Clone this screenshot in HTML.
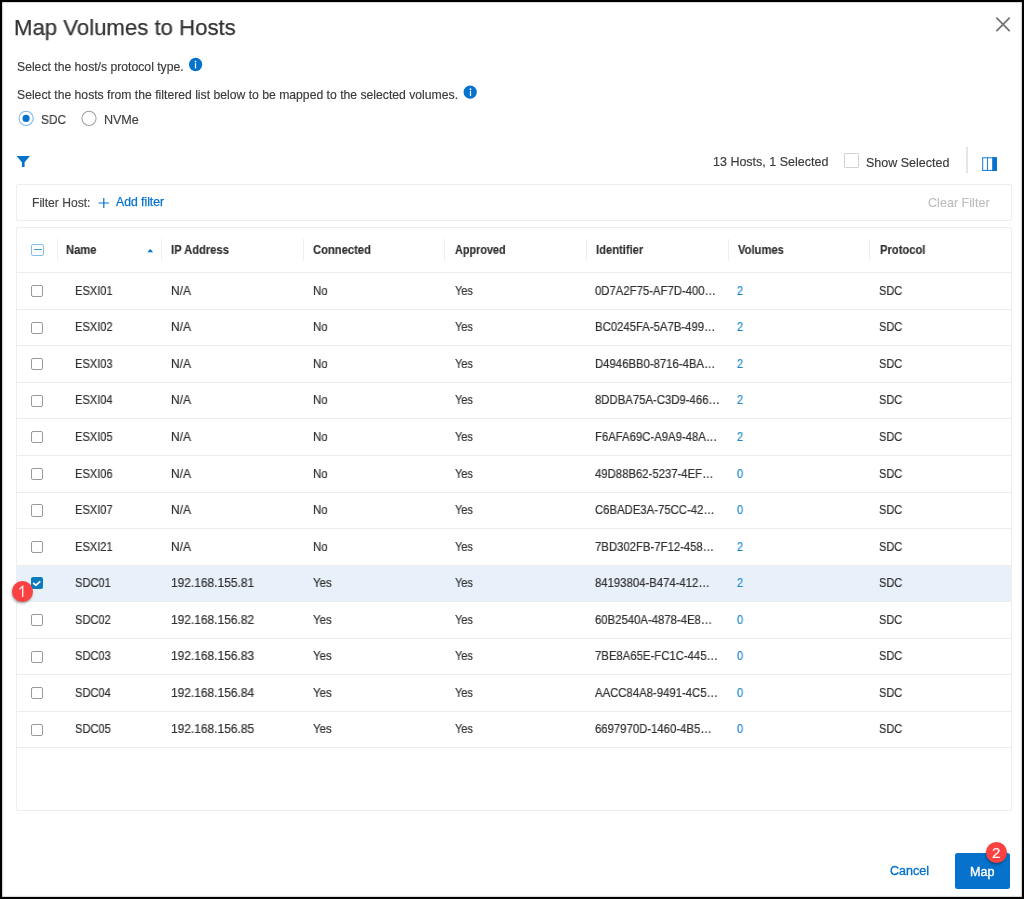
<!DOCTYPE html>
<html><head><meta charset="utf-8"><style>
html,body{margin:0;padding:0;background:#000;}
body{width:1024px;height:899px;overflow:hidden;position:relative;font-family:"Liberation Sans",sans-serif;color:#303030;}
#m{position:absolute;left:2px;top:2px;width:1020px;height:895px;background:#fff;box-shadow:inset 0 0 1.2px 0.3px rgba(0,0,0,0.45);}
.t{position:absolute;white-space:nowrap;will-change:transform;-webkit-text-stroke:0.15px currentColor;}
.a{position:absolute;}
.b{font-weight:bold;color:#303030;}
.blue{color:#0672cb;}
.vb{color:#1f87cd;}
</style></head><body>
<div id="m"></div>
<div class="t " style="left:14.40px;top:14.90px;font-size:22.4px;line-height:26.88px;transform:scaleX(0.99);transform-origin:0 0;color:#333;-webkit-text-stroke:0.25px #333">Map Volumes to Hosts</div>
<svg class="a" style="left:990px;top:10px" width="26" height="28" viewBox="0 0 26 28"><path d="M6.4 7.6 L19.7 21.1 M19.7 7.6 L6.4 21.1" stroke="#737373" stroke-width="1.75" fill="none"/></svg>
<div class="t " style="left:17.20px;top:59.65px;font-size:12.2px;line-height:14.64px;color:#3a3a3a">Select the host/s protocol type.</div>
<svg class="a" style="left:187px;top:56px" width="16" height="16" viewBox="0 0 16 16"><circle cx="8.60" cy="8.50" r="6.65" fill="#0672cb"/><rect x="7.90" y="7.20" width="1.2" height="5.2" fill="#fff"/><circle cx="8.50" cy="5.60" r="0.85" fill="#fff"/></svg>
<div class="t " style="left:17.20px;top:87.65px;font-size:12.2px;line-height:14.64px;color:#3a3a3a">Select the hosts from the filtered list below to be mapped to the selected volumes.</div>
<svg class="a" style="left:462px;top:84px" width="16" height="16" viewBox="0 0 16 16"><circle cx="8.20" cy="8.10" r="6.65" fill="#0672cb"/><rect x="7.90" y="6.80" width="1.2" height="5.2" fill="#fff"/><circle cx="8.50" cy="5.20" r="0.85" fill="#fff"/></svg>
<svg class="a" style="left:16px;top:108px" width="20" height="20" viewBox="0 0 20 20"><circle cx="10.1" cy="10.35" r="7.1" fill="#fff" stroke="#7db6ea" stroke-width="1.1"/><circle cx="10.05" cy="10.4" r="3.55" fill="#0672cb"/></svg>
<div class="t " style="left:41.00px;top:112.87px;font-size:12.6px;line-height:15.12px;transform:scaleX(0.94);transform-origin:0 0;color:#353535">SDC</div>
<svg class="a" style="left:78.5px;top:108px" width="20" height="20" viewBox="0 0 20 20"><circle cx="10" cy="10.35" r="7.1" fill="#fff" stroke="#a0a0a0" stroke-width="1.1"/></svg>
<div class="t " style="left:104.00px;top:112.87px;font-size:12.6px;line-height:15.12px;color:#404040;letter-spacing:-0.1px">NVMe</div>
<svg class="a" style="left:0;top:0" width="40" height="180"><path d="M16.6 155.9 L29.9 155.9 L24.6 162.2 L24.6 166.9 L21.9 166.9 L21.9 162.2 Z" fill="#0672cb"/></svg>
<div class="t " style="left:712.80px;top:154.77px;font-size:12.5px;line-height:15.0px;color:#3a3a3a">13 Hosts, 1 Selected</div>
<div class="a" style="left:844px;top:153px;width:13px;height:13px;border:1px solid #d2d2d2;border-radius:1px;background:#fff"></div>
<div class="t " style="left:866.00px;top:155.57px;font-size:12.5px;line-height:15.0px;color:#3a3a3a">Show Selected</div>
<div class="a" style="left:966px;top:147px;width:1.6px;height:26px;background:#e3e6ea"></div>
<svg class="a" style="left:981px;top:156px" width="18" height="17" viewBox="0 0 18 17"><rect x="1.65" y="1.75" width="13.7" height="12.7" fill="#fff" stroke="#0672cb" stroke-width="1.1" stroke-opacity="0.85"/><rect x="11.2" y="1.2" width="4.7" height="13.8" fill="#0672cb"/><line x1="6.5" y1="1.5" x2="6.5" y2="14.6" stroke="#0672cb" stroke-width="1.1" stroke-opacity="0.85"/></svg>
<div class="a" style="left:16.2px;top:183.6px;width:994.1px;height:35.6px;border:1px solid #eeeeee;border-radius:2px;"></div>
<div class="t " style="left:32.40px;top:195.55px;font-size:12.1px;line-height:14.52px;color:#444">Filter Host:</div>
<svg class="a" style="left:97px;top:197px" width="13" height="12" viewBox="0 0 13 12"><path d="M6.8 1 V11 M1.5 6 H12" stroke="#0672cb" stroke-width="1.2"/></svg>
<div class="t blue" style="left:115.70px;top:195.45px;font-size:12.2px;line-height:14.64px;-webkit-text-stroke:0.25px #0672cb">Add filter</div>
<div class="t " style="left:928.00px;top:196.07px;font-size:12.6px;line-height:15.12px;color:#bebebe">Clear Filter</div>
<div class="a" style="left:16.2px;top:227px;width:994.1px;height:582px;border:1px solid #eeeeee;border-radius:2px;"></div>
<div class="a" style="left:56.9px;top:239.3px;width:1px;height:21.5px;background:#eeeeee"></div>
<div class="a" style="left:161.4px;top:239.3px;width:1px;height:21.5px;background:#eeeeee"></div>
<div class="a" style="left:302.8px;top:239.3px;width:1px;height:21.5px;background:#eeeeee"></div>
<div class="a" style="left:444.4px;top:239.3px;width:1px;height:21.5px;background:#eeeeee"></div>
<div class="a" style="left:586.1px;top:239.3px;width:1px;height:21.5px;background:#eeeeee"></div>
<div class="a" style="left:727.7px;top:239.3px;width:1px;height:21.5px;background:#eeeeee"></div>
<div class="a" style="left:869.0px;top:239.3px;width:1px;height:21.5px;background:#eeeeee"></div>
<div class="a" style="left:31.3px;top:244px;width:10.6px;height:10px;border:1px solid #86bde9;border-radius:2px;background:#fff"></div>
<div class="a" style="left:34px;top:248.9px;width:8px;height:1.2px;background:#3a9ad0;border-radius:0.6px"></div>
<div class="t b" style="left:66.00px;top:242.86px;font-size:12.4px;line-height:14.88px;transform:scaleX(0.904);transform-origin:0 0;">Name</div>
<div class="t b" style="left:171.10px;top:242.86px;font-size:12.4px;line-height:14.88px;transform:scaleX(0.904);transform-origin:0 0;">IP Address</div>
<div class="t b" style="left:313.00px;top:242.86px;font-size:12.4px;line-height:14.88px;transform:scaleX(0.904);transform-origin:0 0;">Connected</div>
<div class="t b" style="left:454.60px;top:242.86px;font-size:12.4px;line-height:14.88px;transform:scaleX(0.875);transform-origin:0 0;">Approved</div>
<div class="t b" style="left:596.00px;top:242.86px;font-size:12.4px;line-height:14.88px;transform:scaleX(0.904);transform-origin:0 0;">Identifier</div>
<div class="t b" style="left:737.60px;top:242.86px;font-size:12.4px;line-height:14.88px;transform:scaleX(0.904);transform-origin:0 0;">Volumes</div>
<div class="t b" style="left:879.70px;top:242.86px;font-size:12.4px;line-height:14.88px;transform:scaleX(0.904);transform-origin:0 0;">Protocol</div>
<svg class="a" style="left:146px;top:248px" width="8" height="6" viewBox="0 0 8 6"><path d="M1.3 4.25 L4.35 1.1 L7.1 4.25 Z" fill="#0672cb"/></svg>
<div class="a" style="left:17.2px;top:272.20px;width:994.1px;height:1px;background:#ededed"></div>
<div class="a" style="left:17.2px;top:308.76px;width:994.1px;height:1px;background:#ededed"></div>
<div class="a" style="left:17.2px;top:345.32px;width:994.1px;height:1px;background:#ededed"></div>
<div class="a" style="left:17.2px;top:381.88px;width:994.1px;height:1px;background:#ededed"></div>
<div class="a" style="left:17.2px;top:418.44px;width:994.1px;height:1px;background:#ededed"></div>
<div class="a" style="left:17.2px;top:455.00px;width:994.1px;height:1px;background:#ededed"></div>
<div class="a" style="left:17.2px;top:491.56px;width:994.1px;height:1px;background:#ededed"></div>
<div class="a" style="left:17.2px;top:528.12px;width:994.1px;height:1px;background:#ededed"></div>
<div class="a" style="left:17.2px;top:565.68px;width:994.1px;height:35.56px;background:#e8f1fa"></div>
<div class="a" style="left:17.2px;top:564.68px;width:994.1px;height:1px;background:#ededed"></div>
<div class="a" style="left:17.2px;top:601.24px;width:994.1px;height:1px;background:#ededed"></div>
<div class="a" style="left:17.2px;top:637.80px;width:994.1px;height:1px;background:#ededed"></div>
<div class="a" style="left:17.2px;top:674.36px;width:994.1px;height:1px;background:#ededed"></div>
<div class="a" style="left:17.2px;top:710.92px;width:994.1px;height:1px;background:#ededed"></div>
<div class="a" style="left:17.2px;top:747.48px;width:994.1px;height:1px;background:#ededed"></div>
<div class="a" style="left:31.2px;top:285.08px;width:9.6px;height:10.1px;border:1px solid #9a9a9a;border-radius:2px;background:#fff"></div>
<div class="t " style="left:74.70px;top:283.75px;font-size:12.2px;line-height:14.64px;transform:scaleX(0.91);transform-origin:0 0;-webkit-text-stroke:0.2px currentColor;">ESXI01</div>
<div class="t " style="left:170.90px;top:283.75px;font-size:12.2px;line-height:14.64px;transform:scaleX(0.98);transform-origin:0 0;-webkit-text-stroke:0.2px currentColor;">N/A</div>
<div class="t " style="left:312.70px;top:283.75px;font-size:12.2px;line-height:14.64px;transform:scaleX(0.94);transform-origin:0 0;-webkit-text-stroke:0.2px currentColor;">No</div>
<div class="t " style="left:454.60px;top:283.75px;font-size:12.2px;line-height:14.64px;transform:scaleX(0.9);transform-origin:0 0;-webkit-text-stroke:0.2px currentColor;">Yes</div>
<div class="t " style="left:595.30px;top:283.75px;font-size:12.2px;line-height:14.64px;transform:scaleX(0.93);transform-origin:0 0;-webkit-text-stroke:0.2px currentColor;">0D7A2F75-AF7D-400…</div>
<div class="t vb" style="left:737.20px;top:283.75px;font-size:12.2px;line-height:14.64px;transform:scaleX(0.9);transform-origin:0 0;-webkit-text-stroke:0.2px currentColor;">2</div>
<div class="t " style="left:879.20px;top:283.75px;font-size:12.2px;line-height:14.64px;transform:scaleX(0.9);transform-origin:0 0;-webkit-text-stroke:0.2px currentColor;">SDC</div>
<div class="a" style="left:31.2px;top:321.64px;width:9.6px;height:10.1px;border:1px solid #9a9a9a;border-radius:2px;background:#fff"></div>
<div class="t " style="left:74.70px;top:320.31px;font-size:12.2px;line-height:14.64px;transform:scaleX(0.91);transform-origin:0 0;-webkit-text-stroke:0.2px currentColor;">ESXI02</div>
<div class="t " style="left:170.90px;top:320.31px;font-size:12.2px;line-height:14.64px;transform:scaleX(0.98);transform-origin:0 0;-webkit-text-stroke:0.2px currentColor;">N/A</div>
<div class="t " style="left:312.70px;top:320.31px;font-size:12.2px;line-height:14.64px;transform:scaleX(0.94);transform-origin:0 0;-webkit-text-stroke:0.2px currentColor;">No</div>
<div class="t " style="left:454.60px;top:320.31px;font-size:12.2px;line-height:14.64px;transform:scaleX(0.9);transform-origin:0 0;-webkit-text-stroke:0.2px currentColor;">Yes</div>
<div class="t " style="left:595.30px;top:320.31px;font-size:12.2px;line-height:14.64px;transform:scaleX(0.93);transform-origin:0 0;-webkit-text-stroke:0.2px currentColor;">BC0245FA-5A7B-499…</div>
<div class="t vb" style="left:737.20px;top:320.31px;font-size:12.2px;line-height:14.64px;transform:scaleX(0.9);transform-origin:0 0;-webkit-text-stroke:0.2px currentColor;">2</div>
<div class="t " style="left:879.20px;top:320.31px;font-size:12.2px;line-height:14.64px;transform:scaleX(0.9);transform-origin:0 0;-webkit-text-stroke:0.2px currentColor;">SDC</div>
<div class="a" style="left:31.2px;top:358.20px;width:9.6px;height:10.1px;border:1px solid #9a9a9a;border-radius:2px;background:#fff"></div>
<div class="t " style="left:74.70px;top:356.87px;font-size:12.2px;line-height:14.64px;transform:scaleX(0.91);transform-origin:0 0;-webkit-text-stroke:0.2px currentColor;">ESXI03</div>
<div class="t " style="left:170.90px;top:356.87px;font-size:12.2px;line-height:14.64px;transform:scaleX(0.98);transform-origin:0 0;-webkit-text-stroke:0.2px currentColor;">N/A</div>
<div class="t " style="left:312.70px;top:356.87px;font-size:12.2px;line-height:14.64px;transform:scaleX(0.94);transform-origin:0 0;-webkit-text-stroke:0.2px currentColor;">No</div>
<div class="t " style="left:454.60px;top:356.87px;font-size:12.2px;line-height:14.64px;transform:scaleX(0.9);transform-origin:0 0;-webkit-text-stroke:0.2px currentColor;">Yes</div>
<div class="t " style="left:595.30px;top:356.87px;font-size:12.2px;line-height:14.64px;transform:scaleX(0.93);transform-origin:0 0;-webkit-text-stroke:0.2px currentColor;">D4946BB0-8716-4BA…</div>
<div class="t vb" style="left:737.20px;top:356.87px;font-size:12.2px;line-height:14.64px;transform:scaleX(0.9);transform-origin:0 0;-webkit-text-stroke:0.2px currentColor;">2</div>
<div class="t " style="left:879.20px;top:356.87px;font-size:12.2px;line-height:14.64px;transform:scaleX(0.9);transform-origin:0 0;-webkit-text-stroke:0.2px currentColor;">SDC</div>
<div class="a" style="left:31.2px;top:394.76px;width:9.6px;height:10.1px;border:1px solid #9a9a9a;border-radius:2px;background:#fff"></div>
<div class="t " style="left:74.70px;top:393.43px;font-size:12.2px;line-height:14.64px;transform:scaleX(0.91);transform-origin:0 0;-webkit-text-stroke:0.2px currentColor;">ESXI04</div>
<div class="t " style="left:170.90px;top:393.43px;font-size:12.2px;line-height:14.64px;transform:scaleX(0.98);transform-origin:0 0;-webkit-text-stroke:0.2px currentColor;">N/A</div>
<div class="t " style="left:312.70px;top:393.43px;font-size:12.2px;line-height:14.64px;transform:scaleX(0.94);transform-origin:0 0;-webkit-text-stroke:0.2px currentColor;">No</div>
<div class="t " style="left:454.60px;top:393.43px;font-size:12.2px;line-height:14.64px;transform:scaleX(0.9);transform-origin:0 0;-webkit-text-stroke:0.2px currentColor;">Yes</div>
<div class="t " style="left:595.30px;top:393.43px;font-size:12.2px;line-height:14.64px;transform:scaleX(0.93);transform-origin:0 0;-webkit-text-stroke:0.2px currentColor;">8DDBA75A-C3D9-466…</div>
<div class="t vb" style="left:737.20px;top:393.43px;font-size:12.2px;line-height:14.64px;transform:scaleX(0.9);transform-origin:0 0;-webkit-text-stroke:0.2px currentColor;">2</div>
<div class="t " style="left:879.20px;top:393.43px;font-size:12.2px;line-height:14.64px;transform:scaleX(0.9);transform-origin:0 0;-webkit-text-stroke:0.2px currentColor;">SDC</div>
<div class="a" style="left:31.2px;top:431.32px;width:9.6px;height:10.1px;border:1px solid #9a9a9a;border-radius:2px;background:#fff"></div>
<div class="t " style="left:74.70px;top:429.99px;font-size:12.2px;line-height:14.64px;transform:scaleX(0.91);transform-origin:0 0;-webkit-text-stroke:0.2px currentColor;">ESXI05</div>
<div class="t " style="left:170.90px;top:429.99px;font-size:12.2px;line-height:14.64px;transform:scaleX(0.98);transform-origin:0 0;-webkit-text-stroke:0.2px currentColor;">N/A</div>
<div class="t " style="left:312.70px;top:429.99px;font-size:12.2px;line-height:14.64px;transform:scaleX(0.94);transform-origin:0 0;-webkit-text-stroke:0.2px currentColor;">No</div>
<div class="t " style="left:454.60px;top:429.99px;font-size:12.2px;line-height:14.64px;transform:scaleX(0.9);transform-origin:0 0;-webkit-text-stroke:0.2px currentColor;">Yes</div>
<div class="t " style="left:595.30px;top:429.99px;font-size:12.2px;line-height:14.64px;transform:scaleX(0.93);transform-origin:0 0;-webkit-text-stroke:0.2px currentColor;">F6AFA69C-A9A9-48A…</div>
<div class="t vb" style="left:737.20px;top:429.99px;font-size:12.2px;line-height:14.64px;transform:scaleX(0.9);transform-origin:0 0;-webkit-text-stroke:0.2px currentColor;">2</div>
<div class="t " style="left:879.20px;top:429.99px;font-size:12.2px;line-height:14.64px;transform:scaleX(0.9);transform-origin:0 0;-webkit-text-stroke:0.2px currentColor;">SDC</div>
<div class="a" style="left:31.2px;top:467.88px;width:9.6px;height:10.1px;border:1px solid #9a9a9a;border-radius:2px;background:#fff"></div>
<div class="t " style="left:74.70px;top:466.55px;font-size:12.2px;line-height:14.64px;transform:scaleX(0.91);transform-origin:0 0;-webkit-text-stroke:0.2px currentColor;">ESXI06</div>
<div class="t " style="left:170.90px;top:466.55px;font-size:12.2px;line-height:14.64px;transform:scaleX(0.98);transform-origin:0 0;-webkit-text-stroke:0.2px currentColor;">N/A</div>
<div class="t " style="left:312.70px;top:466.55px;font-size:12.2px;line-height:14.64px;transform:scaleX(0.94);transform-origin:0 0;-webkit-text-stroke:0.2px currentColor;">No</div>
<div class="t " style="left:454.60px;top:466.55px;font-size:12.2px;line-height:14.64px;transform:scaleX(0.9);transform-origin:0 0;-webkit-text-stroke:0.2px currentColor;">Yes</div>
<div class="t " style="left:595.30px;top:466.55px;font-size:12.2px;line-height:14.64px;transform:scaleX(0.93);transform-origin:0 0;-webkit-text-stroke:0.2px currentColor;">49D88B62-5237-4EF…</div>
<div class="t vb" style="left:737.20px;top:466.55px;font-size:12.2px;line-height:14.64px;transform:scaleX(0.9);transform-origin:0 0;-webkit-text-stroke:0.2px currentColor;">0</div>
<div class="t " style="left:879.20px;top:466.55px;font-size:12.2px;line-height:14.64px;transform:scaleX(0.9);transform-origin:0 0;-webkit-text-stroke:0.2px currentColor;">SDC</div>
<div class="a" style="left:31.2px;top:504.44px;width:9.6px;height:10.1px;border:1px solid #9a9a9a;border-radius:2px;background:#fff"></div>
<div class="t " style="left:74.70px;top:503.11px;font-size:12.2px;line-height:14.64px;transform:scaleX(0.91);transform-origin:0 0;-webkit-text-stroke:0.2px currentColor;">ESXI07</div>
<div class="t " style="left:170.90px;top:503.11px;font-size:12.2px;line-height:14.64px;transform:scaleX(0.98);transform-origin:0 0;-webkit-text-stroke:0.2px currentColor;">N/A</div>
<div class="t " style="left:312.70px;top:503.11px;font-size:12.2px;line-height:14.64px;transform:scaleX(0.94);transform-origin:0 0;-webkit-text-stroke:0.2px currentColor;">No</div>
<div class="t " style="left:454.60px;top:503.11px;font-size:12.2px;line-height:14.64px;transform:scaleX(0.9);transform-origin:0 0;-webkit-text-stroke:0.2px currentColor;">Yes</div>
<div class="t " style="left:595.30px;top:503.11px;font-size:12.2px;line-height:14.64px;transform:scaleX(0.93);transform-origin:0 0;-webkit-text-stroke:0.2px currentColor;">C6BADE3A-75CC-42…</div>
<div class="t vb" style="left:737.20px;top:503.11px;font-size:12.2px;line-height:14.64px;transform:scaleX(0.9);transform-origin:0 0;-webkit-text-stroke:0.2px currentColor;">0</div>
<div class="t " style="left:879.20px;top:503.11px;font-size:12.2px;line-height:14.64px;transform:scaleX(0.9);transform-origin:0 0;-webkit-text-stroke:0.2px currentColor;">SDC</div>
<div class="a" style="left:31.2px;top:541.00px;width:9.6px;height:10.1px;border:1px solid #9a9a9a;border-radius:2px;background:#fff"></div>
<div class="t " style="left:74.70px;top:539.67px;font-size:12.2px;line-height:14.64px;transform:scaleX(0.91);transform-origin:0 0;-webkit-text-stroke:0.2px currentColor;">ESXI21</div>
<div class="t " style="left:170.90px;top:539.67px;font-size:12.2px;line-height:14.64px;transform:scaleX(0.98);transform-origin:0 0;-webkit-text-stroke:0.2px currentColor;">N/A</div>
<div class="t " style="left:312.70px;top:539.67px;font-size:12.2px;line-height:14.64px;transform:scaleX(0.94);transform-origin:0 0;-webkit-text-stroke:0.2px currentColor;">No</div>
<div class="t " style="left:454.60px;top:539.67px;font-size:12.2px;line-height:14.64px;transform:scaleX(0.9);transform-origin:0 0;-webkit-text-stroke:0.2px currentColor;">Yes</div>
<div class="t " style="left:595.30px;top:539.67px;font-size:12.2px;line-height:14.64px;transform:scaleX(0.93);transform-origin:0 0;-webkit-text-stroke:0.2px currentColor;">7BD302FB-7F12-458…</div>
<div class="t vb" style="left:737.20px;top:539.67px;font-size:12.2px;line-height:14.64px;transform:scaleX(0.9);transform-origin:0 0;-webkit-text-stroke:0.2px currentColor;">2</div>
<div class="t " style="left:879.20px;top:539.67px;font-size:12.2px;line-height:14.64px;transform:scaleX(0.9);transform-origin:0 0;-webkit-text-stroke:0.2px currentColor;">SDC</div>
<div class="a" style="left:31.2px;top:577.26px;width:11.8px;height:11.9px;border-radius:2px;background:#0b7bbd"></div>
<svg class="a" style="left:31.2px;top:577.26px" width="12" height="12" viewBox="0 0 12 12"><path d="M2.1 6 L4.9 8.1 L9.3 4.3" stroke="#fff" stroke-width="1.6" fill="none"/></svg>
<div class="t " style="left:74.70px;top:576.23px;font-size:12.2px;line-height:14.64px;transform:scaleX(0.91);transform-origin:0 0;-webkit-text-stroke:0.2px currentColor;">SDC01</div>
<div class="t " style="left:170.90px;top:576.23px;font-size:12.2px;line-height:14.64px;transform:scaleX(0.98);transform-origin:0 0;-webkit-text-stroke:0.2px currentColor;">192.168.155.81</div>
<div class="t " style="left:312.70px;top:576.23px;font-size:12.2px;line-height:14.64px;transform:scaleX(0.94);transform-origin:0 0;-webkit-text-stroke:0.2px currentColor;">Yes</div>
<div class="t " style="left:454.60px;top:576.23px;font-size:12.2px;line-height:14.64px;transform:scaleX(0.9);transform-origin:0 0;-webkit-text-stroke:0.2px currentColor;">Yes</div>
<div class="t " style="left:595.30px;top:576.23px;font-size:12.2px;line-height:14.64px;transform:scaleX(0.93);transform-origin:0 0;-webkit-text-stroke:0.2px currentColor;">84193804-B474-412…</div>
<div class="t vb" style="left:737.20px;top:576.23px;font-size:12.2px;line-height:14.64px;transform:scaleX(0.9);transform-origin:0 0;-webkit-text-stroke:0.2px currentColor;">2</div>
<div class="t " style="left:879.20px;top:576.23px;font-size:12.2px;line-height:14.64px;transform:scaleX(0.9);transform-origin:0 0;-webkit-text-stroke:0.2px currentColor;">SDC</div>
<div class="a" style="left:31.2px;top:614.12px;width:9.6px;height:10.1px;border:1px solid #9a9a9a;border-radius:2px;background:#fff"></div>
<div class="t " style="left:74.70px;top:612.79px;font-size:12.2px;line-height:14.64px;transform:scaleX(0.91);transform-origin:0 0;-webkit-text-stroke:0.2px currentColor;">SDC02</div>
<div class="t " style="left:170.90px;top:612.79px;font-size:12.2px;line-height:14.64px;transform:scaleX(0.98);transform-origin:0 0;-webkit-text-stroke:0.2px currentColor;">192.168.156.82</div>
<div class="t " style="left:312.70px;top:612.79px;font-size:12.2px;line-height:14.64px;transform:scaleX(0.94);transform-origin:0 0;-webkit-text-stroke:0.2px currentColor;">Yes</div>
<div class="t " style="left:454.60px;top:612.79px;font-size:12.2px;line-height:14.64px;transform:scaleX(0.9);transform-origin:0 0;-webkit-text-stroke:0.2px currentColor;">Yes</div>
<div class="t " style="left:595.30px;top:612.79px;font-size:12.2px;line-height:14.64px;transform:scaleX(0.93);transform-origin:0 0;-webkit-text-stroke:0.2px currentColor;">60B2540A-4878-4E8…</div>
<div class="t vb" style="left:737.20px;top:612.79px;font-size:12.2px;line-height:14.64px;transform:scaleX(0.9);transform-origin:0 0;-webkit-text-stroke:0.2px currentColor;">0</div>
<div class="t " style="left:879.20px;top:612.79px;font-size:12.2px;line-height:14.64px;transform:scaleX(0.9);transform-origin:0 0;-webkit-text-stroke:0.2px currentColor;">SDC</div>
<div class="a" style="left:31.2px;top:650.68px;width:9.6px;height:10.1px;border:1px solid #9a9a9a;border-radius:2px;background:#fff"></div>
<div class="t " style="left:74.70px;top:649.35px;font-size:12.2px;line-height:14.64px;transform:scaleX(0.91);transform-origin:0 0;-webkit-text-stroke:0.2px currentColor;">SDC03</div>
<div class="t " style="left:170.90px;top:649.35px;font-size:12.2px;line-height:14.64px;transform:scaleX(0.98);transform-origin:0 0;-webkit-text-stroke:0.2px currentColor;">192.168.156.83</div>
<div class="t " style="left:312.70px;top:649.35px;font-size:12.2px;line-height:14.64px;transform:scaleX(0.94);transform-origin:0 0;-webkit-text-stroke:0.2px currentColor;">Yes</div>
<div class="t " style="left:454.60px;top:649.35px;font-size:12.2px;line-height:14.64px;transform:scaleX(0.9);transform-origin:0 0;-webkit-text-stroke:0.2px currentColor;">Yes</div>
<div class="t " style="left:595.30px;top:649.35px;font-size:12.2px;line-height:14.64px;transform:scaleX(0.93);transform-origin:0 0;-webkit-text-stroke:0.2px currentColor;">7BE8A65E-FC1C-445…</div>
<div class="t vb" style="left:737.20px;top:649.35px;font-size:12.2px;line-height:14.64px;transform:scaleX(0.9);transform-origin:0 0;-webkit-text-stroke:0.2px currentColor;">0</div>
<div class="t " style="left:879.20px;top:649.35px;font-size:12.2px;line-height:14.64px;transform:scaleX(0.9);transform-origin:0 0;-webkit-text-stroke:0.2px currentColor;">SDC</div>
<div class="a" style="left:31.2px;top:687.24px;width:9.6px;height:10.1px;border:1px solid #9a9a9a;border-radius:2px;background:#fff"></div>
<div class="t " style="left:74.70px;top:685.91px;font-size:12.2px;line-height:14.64px;transform:scaleX(0.91);transform-origin:0 0;-webkit-text-stroke:0.2px currentColor;">SDC04</div>
<div class="t " style="left:170.90px;top:685.91px;font-size:12.2px;line-height:14.64px;transform:scaleX(0.98);transform-origin:0 0;-webkit-text-stroke:0.2px currentColor;">192.168.156.84</div>
<div class="t " style="left:312.70px;top:685.91px;font-size:12.2px;line-height:14.64px;transform:scaleX(0.94);transform-origin:0 0;-webkit-text-stroke:0.2px currentColor;">Yes</div>
<div class="t " style="left:454.60px;top:685.91px;font-size:12.2px;line-height:14.64px;transform:scaleX(0.9);transform-origin:0 0;-webkit-text-stroke:0.2px currentColor;">Yes</div>
<div class="t " style="left:595.30px;top:685.91px;font-size:12.2px;line-height:14.64px;transform:scaleX(0.93);transform-origin:0 0;-webkit-text-stroke:0.2px currentColor;">AACC84A8-9491-4C5…</div>
<div class="t vb" style="left:737.20px;top:685.91px;font-size:12.2px;line-height:14.64px;transform:scaleX(0.9);transform-origin:0 0;-webkit-text-stroke:0.2px currentColor;">0</div>
<div class="t " style="left:879.20px;top:685.91px;font-size:12.2px;line-height:14.64px;transform:scaleX(0.9);transform-origin:0 0;-webkit-text-stroke:0.2px currentColor;">SDC</div>
<div class="a" style="left:31.2px;top:723.80px;width:9.6px;height:10.1px;border:1px solid #9a9a9a;border-radius:2px;background:#fff"></div>
<div class="t " style="left:74.70px;top:722.47px;font-size:12.2px;line-height:14.64px;transform:scaleX(0.91);transform-origin:0 0;-webkit-text-stroke:0.2px currentColor;">SDC05</div>
<div class="t " style="left:170.90px;top:722.47px;font-size:12.2px;line-height:14.64px;transform:scaleX(0.98);transform-origin:0 0;-webkit-text-stroke:0.2px currentColor;">192.168.156.85</div>
<div class="t " style="left:312.70px;top:722.47px;font-size:12.2px;line-height:14.64px;transform:scaleX(0.94);transform-origin:0 0;-webkit-text-stroke:0.2px currentColor;">Yes</div>
<div class="t " style="left:454.60px;top:722.47px;font-size:12.2px;line-height:14.64px;transform:scaleX(0.9);transform-origin:0 0;-webkit-text-stroke:0.2px currentColor;">Yes</div>
<div class="t " style="left:595.30px;top:722.47px;font-size:12.2px;line-height:14.64px;transform:scaleX(0.93);transform-origin:0 0;-webkit-text-stroke:0.2px currentColor;">6697970D-1460-4B5…</div>
<div class="t vb" style="left:737.20px;top:722.47px;font-size:12.2px;line-height:14.64px;transform:scaleX(0.9);transform-origin:0 0;-webkit-text-stroke:0.2px currentColor;">0</div>
<div class="t " style="left:879.20px;top:722.47px;font-size:12.2px;line-height:14.64px;transform:scaleX(0.9);transform-origin:0 0;-webkit-text-stroke:0.2px currentColor;">SDC</div>
<div class="a" style="left:11.50px;top:581.00px;width:21.0px;height:21.0px;border-radius:50%;background:#fb4242;box-shadow:-0.5px 1.5px 2.5px rgba(0,0,0,0.35);"></div>
<div class="t " style="left:0.00px;top:-14.20px;font-size:15px;line-height:18.0px;color:#fff"></div>
<svg class="a" style="left:0;top:570px" width="40" height="40"><path d="M19.3 19.4 L22.7 16.3 L22.7 27" stroke="#fff" stroke-width="1.25" fill="none" stroke-linejoin="miter"/></svg>
<div class="t " style="left:890.00px;top:864.37px;font-size:12.5px;line-height:15.0px;color:#0672cb;-webkit-text-stroke:0.35px #0672cb">Cancel</div>
<div class="a" style="left:955.3px;top:852.5px;width:55px;height:36.4px;border-radius:2.5px;background:#0672cb"></div>
<div class="t " style="left:970.30px;top:864.57px;font-size:12.6px;line-height:15.12px;color:#fff;-webkit-text-stroke:0.35px #fff">Map</div>
<div class="a" style="left:986.10px;top:842.20px;width:21.0px;height:21.0px;border-radius:50%;background:#fb4242;box-shadow:-0.5px 1.5px 2.5px rgba(0,0,0,0.35);"></div>
<div class="t " style="left:992.40px;top:844.30px;font-size:15px;line-height:18.0px;color:#fff">2</div>
</body></html>
